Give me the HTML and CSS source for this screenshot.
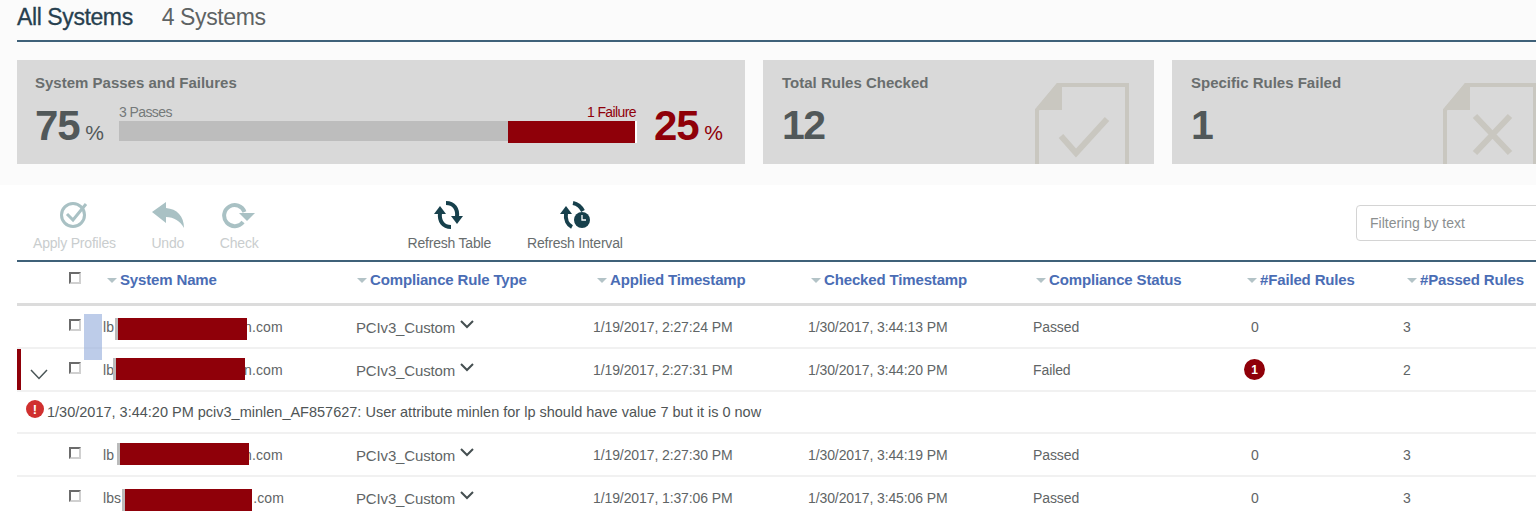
FILE: index.html
```html
<!DOCTYPE html>
<html lang="en">
  <head>
    <meta charset="UTF-8" />
    <title>All Systems</title>
    <link rel="stylesheet" href="styles.css">
  </head>
  <body>
    <div class="top">
      <div class="tabs">
        <span class="tab-active">All Systems</span>
        <span class="tab-count">4 Systems</span>
      </div>

      <div class="cards">
        <div class="card card-wide">
          <div class="card-title">System Passes and Failures</div>
          <div class="summary">
            <div class="big">75<span class="pct">%</span></div>
            <div class="bar-block">
              <div class="bar-labels">
                <span>3 Passes</span>
                <span class="fail-text">1 Failure</span>
              </div>
              <div class="bar">
                <div class="bar-pass"></div>
                <div class="bar-fail"></div>
              </div>
            </div>
            <div class="big fail-text">25<span class="pct">%</span></div>
          </div>
        </div>

        <div class="card card-mid">
          <div class="card-title">Total Rules Checked</div>
          <div class="big big-count">12</div>
          <svg class="doc" width="94" height="81" viewBox="0 0 94 81">
            <path d="M2 81V27L23 2H92V81" fill="none" stroke="#c9c7c0" stroke-width="4" />
            <path d="M0 27L22 0H27V27Z" fill="#c9c7c0" />
            <path d="M26 53L41 70L72 36" fill="none" stroke="#c9c7c0" stroke-width="6" />
          </svg>
        </div>

        <div class="card card-last">
          <div class="card-title">Specific Rules Failed</div>
          <div class="big big-count">1</div>
          <svg class="doc doc-x" width="94" height="81" viewBox="0 0 94 81">
            <path d="M2 81V27L23 2H92V81" fill="none" stroke="#c9c7c0" stroke-width="4" />
            <path d="M0 27L22 0H27V27Z" fill="#c9c7c0" />
            <path d="M32 33L67 70M67 33L32 70" fill="none" stroke="#c9c7c0" stroke-width="6" />
          </svg>
        </div>
      </div>
    </div>

    <div class="main">
      <div class="toolbar">
        <div class="tool disabled">
          <svg width="30" height="30" viewBox="0 0 30 30">
            <circle cx="14" cy="15" r="11.5" fill="none" stroke="#a9c1c4" stroke-width="3" />
            <path d="M8 14L14 20L27 4" fill="none" stroke="#a9c1c4" stroke-width="3" />
          </svg>
          <span>Apply Profiles</span>
        </div>
        <div class="tool disabled">
          <svg width="34" height="30" viewBox="0 0 34 30">
            <path d="M1 12L15 2V8C26 9 33 16 33 28C29 21 23 17 15 17V23Z" fill="#a9c1c4" />
          </svg>
          <span>Undo</span>
        </div>
        <div class="tool disabled">
          <svg width="34" height="30" viewBox="0 0 34 30">
            <path d="M21 22A10.5 10.5 0 1 1 22.5 12" fill="none" stroke="#a9c1c4" stroke-width="4" />
            <path d="M17 13H33L25 21Z" fill="#a9c1c4" />
          </svg>
          <span>Check</span>
        </div>
        <div class="tool tool-refresh">
          <svg width="30" height="30" viewBox="0 0 30 30">
            <path d="M12 3C20 3 24 9 23 17" fill="none" stroke="#17404c" stroke-width="4" />
            <path d="M17 16H29L23 24Z" fill="#17404c" />
            <path d="M17 27C9 27 5 21 6 13" fill="none" stroke="#17404c" stroke-width="4" />
            <path d="M0 14H12L6 6Z" fill="#17404c" />
          </svg>
          <span>Refresh Table</span>
        </div>
        <div class="tool">
          <svg width="32" height="30" viewBox="0 0 32 30">
            <path d="M14 3C19 4 22 7 24 11" fill="none" stroke="#17404c" stroke-width="4" />
            <path d="M13 27C9 25 6 20 7 13" fill="none" stroke="#17404c" stroke-width="4" />
            <path d="M1 14H13L7 6Z" fill="#17404c" />
            <circle cx="23" cy="20" r="8" fill="#17404c" />
            <path d="M23 15V20H27" fill="none" stroke="#fff" stroke-width="1.3" />
          </svg>
          <span>Refresh Interval</span>
        </div>
        <input class="filter" type="text" placeholder="Filtering by text">
      </div>

      <div class="table">
        <div class="row-highlight"></div>

        <div class="head">
          <div class="check-cell"><span class="checkbox"></span></div>
          <div class="th"><span class="sort"></span>System Name</div>
          <div class="th"><span class="sort"></span>Compliance Rule Type</div>
          <div class="th"><span class="sort"></span>Applied Timestamp</div>
          <div class="th"><span class="sort"></span>Checked Timestamp</div>
          <div class="th"><span class="sort"></span>Compliance Status</div>
          <div class="th"><span class="sort"></span>#Failed Rules</div>
          <div class="th"><span class="sort"></span>#Passed Rules</div>
        </div>

        <div class="row">
          <div class="expand"></div>
          <div class="check-cell"><span class="checkbox"></span></div>
          <div class="name">lb<span class="redact redact-low"></span>n.com</div>
          <div class="type">PCIv3_Custom <svg class="chev" width="14" height="9" viewBox="0 0 14 9"><path d="M1 1L7 7L13 1" /></svg></div>
          <div>1/19/2017, 2:27:24 PM</div>
          <div>1/30/2017, 3:44:13 PM</div>
          <div>Passed</div>
          <div class="num">0</div>
          <div>3</div>
        </div>

        <div class="row row-failed">
          <div class="expand"><svg width="18" height="11" viewBox="0 0 18 11"><path d="M1 1L9 9.5L17 1" fill="none" stroke="#4a5557" stroke-width="1.5" /></svg></div>
          <div class="check-cell"><span class="checkbox"></span></div>
          <div class="name">lb<span class="redact redact-left"></span>n.com</div>
          <div class="type">PCIv3_Custom <svg class="chev" width="14" height="9" viewBox="0 0 14 9"><path d="M1 1L7 7L13 1" /></svg></div>
          <div>1/19/2017, 2:27:31 PM</div>
          <div>1/30/2017, 3:44:20 PM</div>
          <div>Failed</div>
          <div><span class="fail-badge">1</span></div>
          <div>2</div>
        </div>

        <div class="message">
          <span class="msg-icon">!</span>
          <span>1/30/2017, 3:44:20 PM pciv3_minlen_AF857627: User attribute minlen for lp should have value 7 but it is 0 now</span>
        </div>

        <div class="row">
          <div class="expand"></div>
          <div class="check-cell"><span class="checkbox"></span></div>
          <div class="name">lb<span class="redact redact-right"></span>n.com</div>
          <div class="type">PCIv3_Custom <svg class="chev" width="14" height="9" viewBox="0 0 14 9"><path d="M1 1L7 7L13 1" /></svg></div>
          <div>1/19/2017, 2:27:30 PM</div>
          <div>1/30/2017, 3:44:19 PM</div>
          <div>Passed</div>
          <div class="num">0</div>
          <div>3</div>
        </div>

        <div class="row row-last">
          <div class="expand"></div>
          <div class="check-cell"><span class="checkbox"></span></div>
          <div class="name">lbs<span class="redact redact-low redact-short"></span>.com</div>
          <div class="type">PCIv3_Custom <svg class="chev" width="14" height="9" viewBox="0 0 14 9"><path d="M1 1L7 7L13 1" /></svg></div>
          <div>1/19/2017, 1:37:06 PM</div>
          <div>1/30/2017, 3:45:06 PM</div>
          <div>Passed</div>
          <div class="num">0</div>
          <div>3</div>
        </div>
      </div>
    </div>
  </body>
</html>
```

FILE: styles.css
```css
* {
  margin: 0;
  padding: 0;
  box-sizing: border-box;
}

html,
body {
  height: 527px;
  overflow: hidden;
}

body {
  font-family: "Liberation Sans", Arial, sans-serif;
  background: #fff;
  color: #5f6566;
  width: 1536px;
}

/* Top summary area */
.top {
  height: 185px;
  background: #fbfbfb;
  padding: 0 0 0 17px;
}

.tabs {
  height: 42px;
  border-bottom: 2px solid #3f6179;
  padding-top: 5px;
  font-size: 23px;
  letter-spacing: -0.4px;
  line-height: 25px;
  display: flex;
  gap: 29px;
}

.tab-active {
  color: #27404f;
  -webkit-text-stroke: 0.3px #27404f;
}

.tab-count {
  color: #5e6364;
}

.cards {
  display: flex;
  gap: 18px;
  margin-top: 18px;
  width: 1560px;
}

.card {
  position: relative;
  height: 104px;
  background: #d9d9d9;
  overflow: hidden;
  padding: 14px 18px;
}

.card-wide {
  width: 728px;
}

.card-mid {
  width: 391px;
  padding-left: 19px;
}

.card-last {
  width: 390px;
  padding-left: 19px;
}

.card-title {
  font-size: 15px;
  font-weight: bold;
  line-height: 18px;
  color: #696e6e;
}

.summary {
  display: flex;
  align-items: flex-start;
  margin-top: 10px;
}

.big {
  font-size: 42px;
  font-weight: bold;
  letter-spacing: -1.2px;
  line-height: 48px;
  color: #515859;
}

.big-count {
  font-size: 41px;
  letter-spacing: -1.5px;
  margin-top: 9px;
}

.pct {
  font-size: 21px;
  font-weight: normal;
  margin-left: 6px;
  letter-spacing: 0;
}

.fail-text,
.fail-text .pct {
  color: #8f0009;
}

.bar-block {
  width: 518px;
  margin: 2px 17px 0 15px;
}

.bar-labels {
  display: flex;
  justify-content: space-between;
  font-size: 14px;
  letter-spacing: -0.6px;
  line-height: 17px;
  height: 15px;
  color: #75797a;
}

.bar-labels .fail-text {
  margin-right: 1px;
}

.bar {
  display: flex;
  height: 22px;
  margin-top: 2px;
}

.bar-pass {
  flex: 1;
  background: #bdbdbd;
  height: 20px;
}

.bar-fail {
  width: 129px;
  background: #8f0009;
  border-right: 2px solid #fff;
}

.doc {
  position: absolute;
  left: 272px;
  bottom: 0;
}

.doc-x {
  left: 271px;
}

/* Toolbar */
.toolbar {
  height: 77px;
  margin-left: 17px;
  padding: 15px 0 0 16px;
  border-bottom: 2px solid #3f6179;
  display: flex;
  gap: 35px;
  position: relative;
}

.tool {
  display: flex;
  flex-direction: column;
  align-items: center;
  gap: 5px;
  font-size: 14px;
  letter-spacing: -0.2px;
  color: #686d6e;
}

.tool span {
  line-height: 17px;
}

.disabled {
  color: #c9cdce;
}

.tool-refresh {
  margin-left: 114px;
  margin-right: 1px;
}

.filter {
  margin-left: auto;
  margin-right: -30px;
  margin-top: 5px;
  width: 210px;
  height: 36px;
  border: 1px solid #d4d4d4;
  border-radius: 4px;
  padding-left: 13px;
  font-family: inherit;
  font-size: 14px;
  outline: none;
}

.filter::placeholder {
  color: #8b8f90;
}

/* Table */
.table {
  margin-left: 17px;
  position: relative;
  font-size: 14px;
  letter-spacing: -0.1px;
  width: 1560px;
}

.row-highlight {
  position: absolute;
  left: 67px;
  top: 52px;
  width: 18px;
  height: 46px;
  background: rgba(148, 172, 220, 0.62);
}

.head {
  display: grid;
  grid-template-columns: 90px 250px 240px 214px 225px 211px 160px 150px;
  align-items: center;
  height: 44px;
  border-bottom: 3px solid #dcdcdc;
  padding-bottom: 7px;
}

.head .check-cell {
  padding-left: 52px;
  margin-top: -2px;
}

.th {
  display: flex;
  align-items: center;
  font-size: 15px;
  font-weight: bold;
  letter-spacing: -0.15px;
  color: #4a6db5;
  white-space: nowrap;
}

.sort {
  width: 0;
  height: 0;
  border-left: 5.5px solid transparent;
  border-right: 5.5px solid transparent;
  border-top: 5px solid #b3c3c7;
  margin: 2px 3px 0 0;
}

.row {
  display: grid;
  grid-template-columns: 52px 34px 253px 237px 215px 225px 214px 156px 150px;
  align-items: center;
  height: 43px;
  border-bottom: 2px solid #f1f1f1;
  white-space: nowrap;
}

.row-failed {
  box-shadow: inset 4px 0 0 #8f0009;
}

.row-last {
  border-bottom: none;
  padding-bottom: 2px;
}

.expand {
  padding: 10px 0 0 13px;
  line-height: 0;
}

.checkbox {
  display: block;
  width: 12px;
  height: 12px;
  border: 2px solid #6b6b6b;
  border-right-color: #d0d0d0;
  border-bottom-color: #d0d0d0;
  background: #fff;
}

.row .check-cell {
  margin-top: -4px;
}

.name {
  display: flex;
  align-items: center;
  margin-top: 1px;
  letter-spacing: 0.1px;
}

.redact {
  position: relative;
  width: 129px;
  height: 22px;
  background: #8f0009;
  margin: -3px -3px 0 4px;
  box-shadow: -3px 0 0 #bbb;
}

.redact-low {
  margin-top: 4px;
}

.redact-left {
  margin-left: 2px;
  margin-right: -1px;
}

.redact-right {
  margin-left: 6px;
  margin-right: -5px;
}

.redact-short {
  width: 127px;
  margin-right: 1px;
}

.type {
  margin-top: 1px;
  display: flex;
  align-items: center;
  gap: 2px;
  font-size: 15px;
  letter-spacing: -0.15px;
}

.chev {
  fill: none;
  stroke: #454f51;
  stroke-width: 2;
  margin: -6px 0 0 3px;
}

.num {
  padding-left: 4px;
}

.fail-badge {
  display: flex;
  align-items: center;
  justify-content: center;
  width: 21px;
  height: 21px;
  margin-left: -3px;
  border-radius: 50%;
  background: #8f0009;
  color: #fff;
  font-size: 12px;
  font-weight: bold;
}

.message {
  display: flex;
  align-items: center;
  gap: 3px;
  height: 42px;
  padding-left: 9px;
  border-bottom: 2px solid #f1f1f1;
  font-size: 14.5px;
  letter-spacing: 0;
  white-space: nowrap;
  color: #4f5556;
}

.msg-icon {
  display: flex;
  align-items: center;
  justify-content: center;
  width: 18px;
  height: 18px;
  margin-top: -6px;
  border-radius: 50%;
  background: #d0302f;
  color: #fff;
  font-size: 13px;
  font-weight: bold;
}
```
